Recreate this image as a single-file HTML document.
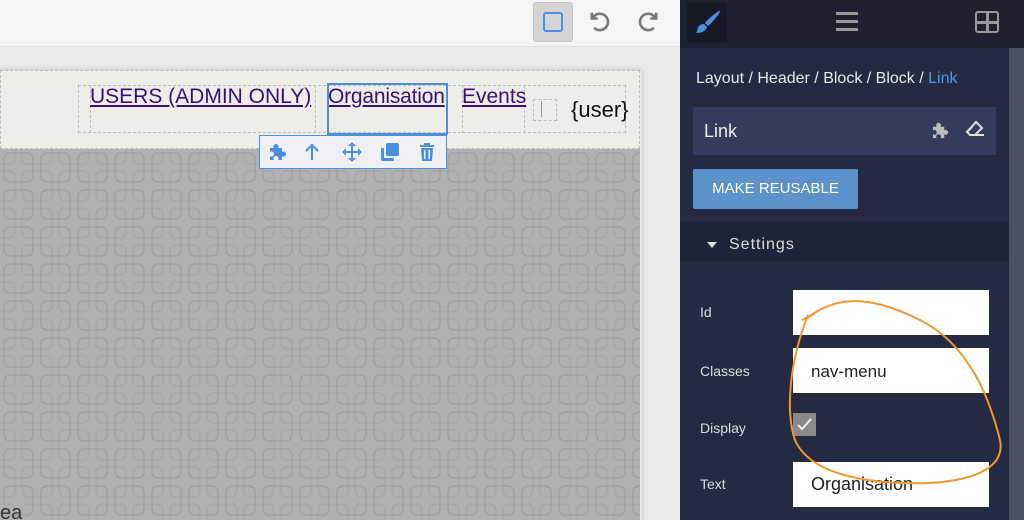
<!DOCTYPE html><html><head><style>
*{margin:0;padding:0;box-sizing:border-box}
html,body{width:1024px;height:520px;overflow:hidden}
body{background:#e9e9e9;font-family:"Liberation Sans",sans-serif;position:relative}
.a{position:absolute}
a{color:#3b0f7a;text-decoration:underline}
</style></head><body>
<div class="a" style="left:0;top:0;width:680px;height:47px;background:#f5f5f5;border-bottom:1px solid #e0e0e0"></div>
<div class="a" style="left:533px;top:2px;width:40px;height:40px;background:#d4d4d4;border:1px solid #c4c4c4;border-radius:3px"></div>
<div class="a" style="left:543px;top:12px;width:20px;height:20px;border:2.5px solid #4a8fe0;border-radius:3px"></div>
<svg class="a" style="left:586px;top:8px" width="28" height="28" viewBox="0 0 24 24" fill="none" stroke="#777" stroke-width="2.2"><path d="M5 4v5h5"/><path d="M5.5 9A7 7 0 1 1 7 17"/></svg>
<svg class="a" style="left:634px;top:8px" width="28" height="28" viewBox="0 0 24 24" fill="none" stroke="#777" stroke-width="2.2"><path d="M19 4v5h-5"/><path d="M18.5 9A7 7 0 1 0 17 17"/></svg>
<div class="a" style="left:0;top:70px;width:642px;height:450px;box-shadow:0 0 4px rgba(0,0,0,.2)"></div>
<div class="a" style="left:0;top:70px;width:640px;height:79px;background:#efede8;border:1px dashed #bbb"></div>
<div class="a" style="left:78px;top:85px;width:548px;height:48px;border:1px dashed #bbb"></div>
<div class="a" style="left:90px;top:85px;width:226px;height:48px;border-right:1px dashed #bbb;border-left:1px dashed #bbb"></div>
<div class="a" style="left:462px;top:85px;width:63px;height:48px;border-left:1px dashed #bbb;border-right:1px dashed #bbb"></div>
<div class="a" style="left:533px;top:99px;width:24px;height:22px;border:1px dashed #bbb"></div>
<div class="a" style="left:541px;top:101px;width:1px;height:16px;background:#999"></div>
<a class="a" style="left:90px;top:85px;font-size:21px">USERS (ADMIN ONLY)</a>
<a class="a" style="left:328px;top:85px;font-size:21px;letter-spacing:-.2px">Organisation</a>
<a class="a" style="left:462px;top:85px;font-size:21px">Events</a>
<div class="a" style="left:571px;top:97px;font-size:22px;color:#111">{user}</div>
<div class="a" style="left:327px;top:83px;width:121px;height:52px;border:2px solid #4a8fe0"></div>
<svg class="a" style="left:0;top:149px" width="640" height="371"><defs><pattern id="p" width="37" height="37" patternUnits="userSpaceOnUse"><rect width="37" height="37" fill="#b1b1b1"/><rect x="4" y="4" width="29" height="29" rx="6" fill="none" stroke="#9b9b9b" stroke-width="1"/><rect x="-14" y="-14" width="29" height="29" rx="6" fill="none" stroke="#a3a3a3"/><rect x="22" y="22" width="29" height="29" rx="6" fill="none" stroke="#a3a3a3"/><rect x="22" y="-14" width="29" height="29" rx="6" fill="none" stroke="#a3a3a3"/><rect x="-14" y="22" width="29" height="29" rx="6" fill="none" stroke="#a3a3a3"/></pattern></defs><rect width="640" height="371" fill="url(#p)"/></svg>
<div class="a" style="left:259px;top:135px;width:188px;height:34px;background:#eef0f3;border:1px solid #4a8fe0"></div>
<svg class="a" style="left:268px;top:142px" width="20" height="20" viewBox="0 0 20 20" fill="#4a8fe0"><path d="M2 6h4a2.5 2.5 0 1 1 4 0h4v4a2.5 2.5 0 1 1 0 4v4h-4a2.5 2.5 0 1 0-4 0H2v-4a2.5 2.5 0 1 0 0-4z"/></svg>
<svg class="a" style="left:302px;top:142px" width="20" height="20" viewBox="0 0 20 20" fill="none" stroke="#4a8fe0" stroke-width="2"><path d="M10 18V3M4 9l6-6 6 6"/></svg>
<svg class="a" style="left:342px;top:142px" width="20" height="20" viewBox="0 0 20 20" fill="#4a8fe0"><path d="M9 3h2v14H9zM3 9h14v2H3z"/><path d="M10 0l4 4H6zM10 20l4-4H6zM0 10l4-4v8zM20 10l-4-4v8z"/></svg>
<svg class="a" style="left:380px;top:142px" width="20" height="20" viewBox="0 0 20 20" fill="#4a8fe0"><rect x="6" y="1" width="13" height="13" rx="2"/><path d="M1 6h3v10h10v3H3a2 2 0 0 1-2-2z"/></svg>
<svg class="a" style="left:417px;top:142px" width="20" height="20" viewBox="0 0 20 20" fill="#4a8fe0"><path d="M3 3h14v2H3zM7 1h6v2H7zM4 6h12l-1 13H5z"/><path d="M7 8h1.5v9H7zM11.5 8H13v9h-1.5z" fill="#eef0f3"/></svg>
<div class="a" style="left:680px;top:0;width:344px;height:520px;background:#232a42"></div>
<div class="a" style="left:680px;top:0;width:344px;height:48px;background:#1d2130"></div>
<div class="a" style="left:687px;top:3px;width:40px;height:40px;background:#161a26;border-radius:2px"></div>
<svg class="a" style="left:693px;top:9px" width="30" height="28" viewBox="0 0 30 28" fill="#4a8fe0"><path d="M27 2c1 1-8 12-12 15l-3-3C15 10 26 1 27 2z"/><path d="M11 15l3 3c-1 4-5 6-11 6 2-2 1-5 3-7s4-2 5-2z"/></svg>
<div class="a" style="left:836px;top:12px;width:22px;height:3px;background:#999;box-shadow:0 8px #999,0 16px #999"></div>
<div class="a" style="left:975px;top:11px;width:24px;height:22px;border:2.5px solid #999;border-radius:3px"></div>
<div class="a" style="left:986px;top:12px;width:2.5px;height:20px;background:#999"></div>
<div class="a" style="left:976px;top:21px;width:22px;height:2.5px;background:#999"></div>
<div class="a" style="left:1009px;top:48px;width:15px;height:472px;background:#4b5163"></div>
<div class="a" style="left:696px;top:70px;font-size:16px;color:#e8e8e8">Layout / Header / Block / Block / <span style="color:#4a9be8">Link</span></div>
<div class="a" style="left:693px;top:107px;width:303px;height:48px;background:#333c5a"></div>
<div class="a" style="left:704px;top:121px;font-size:18px;color:#eee">Link</div>
<svg class="a" style="left:931px;top:121px" width="19" height="19" viewBox="0 0 20 20" fill="#bbb"><path d="M2 6h4a2.5 2.5 0 1 1 4 0h4v4a2.5 2.5 0 1 1 0 4v4h-4a2.5 2.5 0 1 0-4 0H2v-4a2.5 2.5 0 1 0 0-4z"/></svg>
<svg class="a" style="left:965px;top:120px" width="20" height="18" viewBox="0 0 20 18" fill="none" stroke="#ddd" stroke-width="2"><path d="M11 2l6 6-7 7H5l-3-3z"/><path d="M5 15h14"/><path d="M2 12l5-5" /></svg>
<div class="a" style="left:693px;top:169px;width:165px;height:40px;background:#5b92c9;border-radius:2px;color:#fff;font-size:15px;line-height:40px;text-align:center">MAKE REUSABLE</div>
<div class="a" style="left:680px;top:222px;width:329px;height:40px;background:#1e2437"></div>
<div class="a" style="left:707px;top:242px;width:0;height:0;border-left:5px solid transparent;border-right:5px solid transparent;border-top:6px solid #ddd"></div>
<div class="a" style="left:729px;top:236px;font-size:16px;color:#ddd;letter-spacing:1px">Settings</div>
<div class="a" style="left:700px;top:304px;font-size:14px;color:#ddd">Id</div>
<div class="a" style="left:700px;top:363px;font-size:14px;color:#ddd">Classes</div>
<div class="a" style="left:700px;top:420px;font-size:14px;color:#ddd">Display</div>
<div class="a" style="left:700px;top:476px;font-size:14px;color:#ddd">Text</div>
<div class="a" style="left:793px;top:290px;width:196px;height:45px;background:#fff"></div>
<div class="a" style="left:793px;top:348px;width:196px;height:45px;background:#fff;font-size:17px;color:#222;padding:14px 18px">nav-menu</div>
<div class="a" style="left:793px;top:413px;width:23px;height:23px;background:#8a8a8a"></div>
<svg class="a" style="left:795px;top:415px" width="19" height="19" viewBox="0 0 19 19" fill="none" stroke="#eee" stroke-width="2"><path d="M3 10l4 4 9-10"/></svg>
<div class="a" style="left:793px;top:462px;width:196px;height:45px;background:#fff;font-size:18px;color:#222;padding:12px 18px">Organisation</div>
<svg class="a" style="left:780px;top:290px" width="230" height="200" fill="none" stroke="#f0972f" stroke-width="2"><path d="M25 30C60 0 100 10 140 30C190 55 210 110 220 150C225 175 200 190 150 193C90 195 30 185 15 150C5 120 10 70 28 25M22 30l12-6"/></svg>
<div class="a" style="left:0;top:502px;font-size:20px;color:#333">ea</div>
</body></html>
